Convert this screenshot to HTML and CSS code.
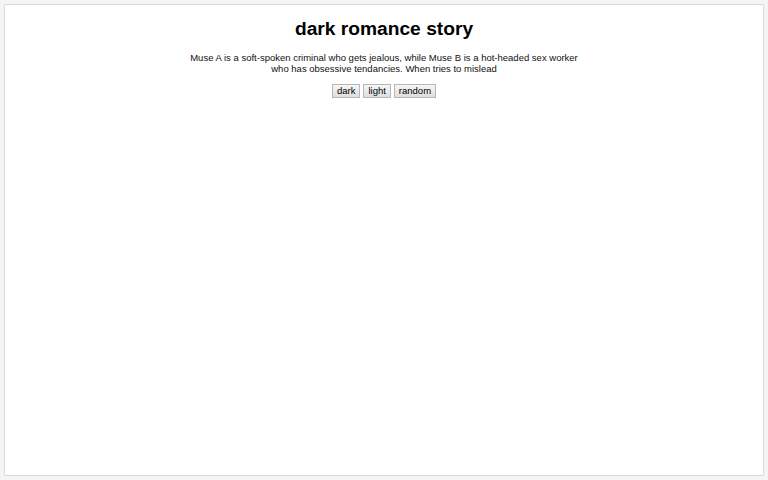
FILE: index.html
```html
<!DOCTYPE html>
<html lang="en">
<head>
  <meta charset="UTF-8">
  <title>dark romance story</title>
  <meta name="viewport" content="width=device-width, initial-scale=1">
  <link rel="stylesheet" href="styles.css">
</head>
<body>
  <div class="container">
    <h1 class="title">dark romance story</h1>
    <p id="prompt" class="prompt">Muse A is a soft-spoken criminal who gets jealous, while Muse B is a hot-headed sex worker who has obsessive tendancies. When tries to mislead</p>
    <div class="buttons">
      <button>dark</button>
      <button>light</button>
      <button>random</button>
    </div>
  </div>
</body>
</html>
```

FILE: styles.css
```css
html, body { height: 100%; }
body {
  font-family: "Liberation Sans", Arial, sans-serif;
  background: #f4f4f4;
  margin: 0;
  padding: 4px;
  box-sizing: border-box;
}
.container {
  height: 100%;
  box-sizing: border-box;
  background: #fff;
  border: 1px solid #dcdcdc;
  text-align: center;
  padding-top: 13px;
}
.title {
  font-size: 19.2px;
  font-weight: bold;
  margin: 0 0 12px;
  line-height: 22px;
}
.prompt {
  font-size: 9.5px;
  line-height: 11px;
  max-width: 400px;
  margin: 0 auto 10px;
  color: #111;
}
.buttons {
  display: flex;
  justify-content: center;
  gap: 3px;
}
button {
  font-family: inherit;
  font-size: 9.5px;
  padding: 1px 4px;
  height: 14px;
  line-height: 10px;
  border: 1px solid #b8b8b8;
  border-radius: 0;
  background: linear-gradient(#f6f6f6, #dedede);
  color: #000;
}
```
